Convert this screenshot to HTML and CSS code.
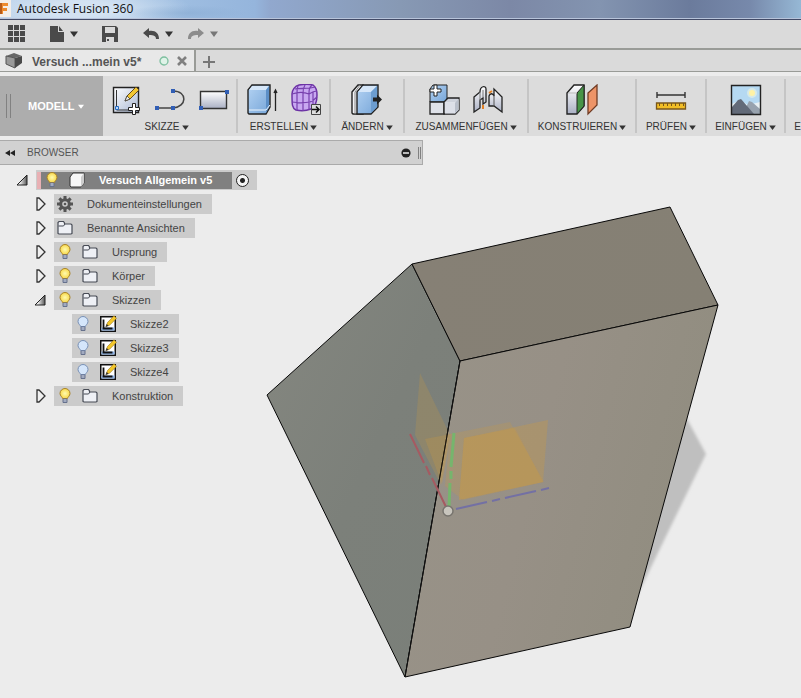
FILE: index.html
```html
<!DOCTYPE html>
<html lang="de">
<head>
<meta charset="utf-8">
<title>Autodesk Fusion 360</title>
<meta name="viewport" content="width=device-width, initial-scale=1">
<link rel="stylesheet" href="styles.css">
</head>
<body>
<svg class="sprite" aria-hidden="true">
  <defs>
    <linearGradient id="blue" x1="0" y1="0" x2="1" y2="1"><stop offset="0" stop-color="#b4d3f3"/><stop offset="1" stop-color="#76a5d8"/></linearGradient>
    <linearGradient id="silver" x1="0" y1="0" x2="0" y2="1"><stop offset="0" stop-color="#fff"/><stop offset="1" stop-color="#aab0c4"/></linearGradient>
    <linearGradient id="sheet" x1="0" y1="0" x2="1" y2="1"><stop offset="0" stop-color="#fff"/><stop offset="1" stop-color="#a9b8d4"/></linearGradient>
    <radialGradient id="glow"><stop offset="0" stop-color="#fffbb0"/><stop offset="1" stop-color="#f8d84a"/></radialGradient>
    <linearGradient id="wedge"><stop offset="0.3" stop-color="#eee"/><stop offset="1" stop-color="#555"/></linearGradient>
  </defs>
  <symbol id="caret" viewBox="0 0 8 6"><path d="M0 0.500h8L4 6z" fill="currentColor"/></symbol>
  <symbol id="bulb-on" viewBox="0 0 14 16"><path d="M4.500 10.500C4.500 9 2 8 2 5.500a5 5 0 0 1 10 0C12 8 9.500 9 9.500 10.500z" fill="url(#glow)" stroke="#a98228"/><path d="M5 11h4v3.500H5z" fill="#dde5f4" stroke="#66718c"/><path d="M5 13h4" stroke="#66718c"/></symbol>
  <symbol id="bulb-off" viewBox="0 0 14 16"><path d="M4.500 10.500C4.500 9 2 8 2 5.500a5 5 0 0 1 10 0C12 8 9.500 9 9.500 10.500z" fill="#d5e6fb" stroke="#7890b5"/><path d="M5 11h4v3.500H5z" fill="#dde5f4" stroke="#66718c"/><path d="M5 13h4" stroke="#66718c"/></symbol>
  <symbol id="folder" viewBox="0 0 16 16"><path d="M1 13.500v-11l1-1h4.500l1 1.500v1H14l1 1v8.500l-1 .5H2z" fill="#eef0f5" stroke="#474b55" stroke-width="1.200"/><path d="M1.500 6h5l1.500-2" fill="none" stroke="#474b55"/></symbol>
  <symbol id="sketch" viewBox="0 0 18 18"><path d="M1.750 1.750h14.500v14.500H1.750z" fill="#fff" stroke="#111" stroke-width="1.500"/><path d="M2.500 12.500h13v3h-13z" fill="#8cb4ea"/><path d="M4.500 4.500v9h9" fill="none" stroke="#111" stroke-width="1.800"/><path d="M7 11.500l1.500-4L15 .8l2.500 2.500-7 7z" fill="#f3c72a" stroke="#9a7418" stroke-width=".6"/><path d="M6.500 12l1.200-3 1.900 1.800z" fill="#333"/></symbol>
  <symbol id="closed" viewBox="0 0 10 14"><path d="M1 1h2l6 6-6 6H1z" fill="#f0f0f0" stroke="#333" stroke-width="1.300"/></symbol>
  <symbol id="open" viewBox="0 0 12 12"><path d="M11 1v10H1z" fill="url(#wedge)" stroke="#222"/></symbol>
  <symbol id="gear" viewBox="0 0 16 16"><path d="M8 0v16M0 8h16M2.350 2.350l11.300 11.300M2.350 13.650l11.300-11.300" stroke="#555" stroke-width="3"/><circle cx="8" cy="8" r="4.300" fill="#cbcbcb" stroke="#555" stroke-width="3"/><circle cx="8" cy="8" r="1.300" fill="#555"/></symbol>
</svg>

<header class="titlebar">
  <svg class="logo" viewBox="0 0 12 18"><path d="M0 0h11v17H0z" fill="#f4eee8"/><path d="M0 3h8v3H3v2h4v3H3v3H0z" fill="#ee8b2e"/><path d="M0 3h2v11H0z" fill="#b75b18"/></svg>
  <h1>Autodesk Fusion 360</h1>
</header>

<nav class="quickbar" aria-label="Schnellzugriff">
  <button aria-label="Datengruppe"><svg width="18" height="18" viewBox="0 0 18 18" fill="#4a4a4a"><path d="M0 0h5v5H0zM6 0h5v5H6zM12 0h5v5h-5zM0 6h5v5H0zM6 6h5v5H6zM12 6h5v5h-5zM0 12h5v5H0zM6 12h5v5H6zM12 12h5v5h-5z"/></svg></button>
  <button aria-label="Datei"><svg width="16" height="18" viewBox="0 0 16 18" fill="#4a4a4a"><path d="M1 1h8v6h6v10H1zM10 1l4 5h-4z"/></svg><svg class="caret"><use href="#caret"/></svg></button>
  <button aria-label="Speichern"><svg width="18" height="18" viewBox="0 0 18 18"><path d="M1 1h14l2 2v14H1z" fill="#4a4a4a"/><path d="M4 2h10v6H4z" fill="#dadada"/><path d="M5 12h8v5H5z" fill="#dadada"/><path d="M6 14h2v2H6z" fill="#4a4a4a"/></svg></button>
  <div class="history">
    <button aria-label="Rückgängig"><svg width="18" height="14" viewBox="0 0 18 14"><path d="M1 6l6-5v3c6-1 10 2 10 8h-3c0-3-2-4-7-4v3z" fill="#4a4a4a"/></svg><svg class="caret"><use href="#caret"/></svg></button>
    <button class="muted" aria-label="Wiederherstellen"><svg width="18" height="14" viewBox="0 0 18 14"><path d="M17 6l-6-5v3C5 3 1 6 1 12h3c0-3 2-4 7-4v3z" fill="#8c8c8c"/></svg><svg class="caret"><use href="#caret"/></svg></button>
  </div>
</nav>

<div class="tabs">
  <div class="tab">
    <svg width="18" height="18" viewBox="0 0 18 18"><path d="M1 4l8-3 8 3-7 2z" fill="#666"/><path d="M1 4l9 2v10l-9-4z" fill="#999" stroke="#555"/><path d="M10 6l7-2v7l-7 5z" fill="#4a4a4a"/></svg>
    <span class="tab-name">Versuch ...mein v5*</span>
    <svg width="10" height="10" viewBox="0 0 10 10"><circle cx="5" cy="5" r="4" fill="#dff3e8" stroke="#7dbf9f" stroke-width="1.300"/></svg>
    <button aria-label="Schließen"><svg width="10" height="10" viewBox="0 0 10 10"><path d="M1 1l8 8M9 1L1 9" stroke="#808080" stroke-width="2.600"/></svg></button>
  </div>
  <button class="new-tab" aria-label="Neue Registerkarte"><svg width="12" height="12" viewBox="0 0 12 12"><path d="M6 0v12M0 6h12" stroke="#777" stroke-width="2"/></svg></button>
</div>

<div class="ribbon">
  <button class="workspace"><span class="grip"></span><span>MODELL</span><svg class="caret small"><use href="#caret"/></svg></button>

  <section class="group sketch">
    <div class="tools">
      <button aria-label="Skizze erstellen"><svg width="30" height="32" viewBox="0 0 30 32"><path d="M1.500 3.500h25v25h-25z" fill="url(#sheet)" stroke="#222" stroke-width="1.400"/><path d="M4.500 6v20H22" fill="none" stroke="#333"/><path d="M3.500 22.500h3v3h-3z" fill="#b9d6fa" stroke="#246ac0"/><path d="M13 17l2-5L24 3l3 3-9 9z" fill="#f2c733" stroke="#654a1a"/><path d="M13 17l2-5 3 3z" fill="#eee" stroke="#333" stroke-width=".7"/><path d="M20.500 19.500h3v4h4v3h-4v4h-3v-4h-4v-3h4z" fill="#fff" stroke="#222"/></svg></button>
      <button aria-label="Linie"><svg width="32" height="32" viewBox="0 0 32 32"><path d="M3 24h16c14-1 15-17 0-17" fill="none" stroke="#444" stroke-width="1.500"/><path d="M1 22h4v4H1zM17 22h4v4h-4zM17 5h4v4h-4z" fill="#315eb5"/></svg></button>
      <button aria-label="Rechteck"><svg width="32" height="32" viewBox="0 0 32 32"><path d="M2.500 7.500h26v17h-26z" fill="url(#silver)" stroke="#333" stroke-width="1.400"/><path d="M27 6h4v4h-4zM1 22h4v4H1z" fill="#315eb5"/></svg></button>
    </div>
    <button class="group-name">SKIZZE<svg class="caret"><use href="#caret"/></svg></button>
  </section>

  <section class="group create">
    <div class="tools">
      <button aria-label="Extrusion"><svg width="32" height="32" viewBox="0 0 32 32"><path d="M2 6l4-5h18v22l-4 7H3l-1-1z" fill="url(#blue)" stroke="#222" stroke-width="1.400"/><path d="M3 6l3-4h17l-3 4z" fill="#d6e7f9"/><path d="M20 6l3-4v21l-3 6z" fill="#5c8fc7"/><path d="M3 26h17l4-5" fill="none" stroke="#edf5fc"/><path d="M29.500 27V6M28 9l1.500-3L31 9" fill="none" stroke="#222" stroke-width="1.300"/></svg></button>
      <button aria-label="Form erstellen"><svg width="32" height="32" viewBox="0 0 32 32"><path d="M2 10c0-4 3-8 7-9 6-1 10-1 14 0 3 2 4 5 4 10 0 8-2 11-6 14-5 2-11 2-15 1-4-2-4-5-4-16z" fill="#c8a8f1" stroke="#6c32a5" stroke-width="1.500"/><path d="M2 10c6-2 12-2 17 0 3-2 6-3 8-3M2 18c6 1 13 1 18 0 3-1 5-3 7-5M8 2c-1 2-1 4-1 7v17M15 1c-2 3-2 5-2 8v18M22 1c-3 3-3 5-3 9v16M5 5c6-1 14 0 20-2M23 8v15" fill="none" stroke="#7740ae" stroke-width="1.200"/><path d="M21.500 20.500h9v10h-9z" fill="#ddd" stroke="#444"/><path d="M22 25.500h6M26 22.500l3 3-3 3" stroke="#111" fill="none" stroke-width="1.500"/></svg></button>
    </div>
    <button class="group-name">ERSTELLEN<svg class="caret"><use href="#caret"/></svg></button>
  </section>

  <section class="group modify">
    <div class="tools">
      <button aria-label="Drücken/Ziehen"><svg width="32" height="32" viewBox="0 0 32 32"><path d="M1 8l6-7h5v29H2l-1-1z" fill="#f3f4f7" stroke="#222" stroke-width="1.400"/><path d="M4 30V8l5-7" fill="none" stroke="#888"/><path d="M6 8l6-7h15v22l-7 7H6z" fill="url(#blue)" stroke="#222" stroke-width="1.400"/><path d="M7 8l5-6h14l-6 6z" fill="#d6e7f9"/><path d="M20 8l6-6v21l-6 6z" fill="#6c9dd0"/><path d="M22 13.500h4v-3l5 5-5 5v-3h-4z" fill="#222"/></svg></button>
    </div>
    <button class="group-name">ÄNDERN<svg class="caret"><use href="#caret"/></svg></button>
  </section>

  <section class="group assemble">
    <div class="tools">
      <button aria-label="Neue Komponente"><svg width="32" height="32" viewBox="0 0 32 32"><path d="M2 5l3-4h14v14l-3 3H2z" fill="url(#blue)" stroke="#222"/><path d="M2 18h14v12H2z" fill="#dfe2e9" stroke="#222" stroke-width="1.300"/><path d="M16 18l4-4h11v12l-4 4H16z" fill="#cfd3dc" stroke="#222" stroke-width="1.300"/><path d="M17 18.500h10l3.500-3.500v11L27 29.500z" fill="#f4f5f8"/><path d="M27 18.500l3.500-3.500v11L27 29.500z" fill="#b9bfca"/><path d="M17 18.500h10v11H17z" fill="#dde0e8"/><path d="M6 1h3v4h4v3H9v4H6V8H2V5h4z" fill="#fff" stroke="#222"/></svg></button>
      <button aria-label="Verbindung"><svg width="32" height="32" viewBox="0 0 32 32"><path d="M2 13l6-5c0-6 6-7 6-3v13l-3 2v-6l-3 2v8l-6 4z" fill="url(#silver)" stroke="#222" stroke-width="1.300"/><path d="M8 8v9M11 6v8" stroke="#777"/><path d="M17 12c1-3 4-3 5 0V5l8 8v15l-8-6h-5z" fill="url(#silver)" stroke="#222" stroke-width="1.300"/><path d="M22 11v11" stroke="#555"/><path d="M11 21v4M17 9l3-2" stroke="#e48125" stroke-width="2"/></svg></button>
    </div>
    <button class="group-name">ZUSAMMENFÜGEN<svg class="caret"><use href="#caret"/></svg></button>
  </section>

  <section class="group construct">
    <div class="tools">
      <button aria-label="Versatzebene"><svg width="32" height="32" viewBox="0 0 32 32"><path d="M1 9l7-8h10v21l-7 8H1z" fill="url(#silver)" stroke="#222" stroke-width="1.400"/><path d="M11 9l7-8v21l-7 8z" fill="#479447" stroke="#222"/><path d="M2 9h9" stroke="#bbb"/><path d="M22 9l9-8v20l-9 9z" fill="#ed9467" stroke="#713c24" stroke-width="1.300"/></svg></button>
    </div>
    <button class="group-name">KONSTRUIEREN<svg class="caret"><use href="#caret"/></svg></button>
  </section>

  <section class="group inspect">
    <div class="tools">
      <button aria-label="Messen"><svg width="32" height="32" viewBox="0 0 32 32"><path d="M2 11h28M2 8v6M30 8v6" stroke="#333" stroke-width="1.400"/><path d="M1.500 19h29v6h-29z" fill="#f1bd25" stroke="#79571b" stroke-width="1.300"/><path d="M4.500 19v3M8.500 19v3M12.500 19v3M16.500 19v3M20.500 19v3M24.500 19v3M28.500 19v3" stroke="#79571b"/></svg></button>
    </div>
    <button class="group-name">PRÜFEN<svg class="caret"><use href="#caret"/></svg></button>
  </section>

  <section class="group insert">
    <div class="tools">
      <button aria-label="Bild einfügen"><svg width="32" height="32" viewBox="0 0 32 32"><path d="M1.500 1.500h29v29h-29z" fill="#b5d9f2"/><circle cx="22" cy="9" r="5" fill="#d6e9e8"/><circle cx="22" cy="9" r="3" fill="#fff2a5"/><path d="M2 20l8-4 8 5 12-3v12H2z" fill="#e8f0f3"/><path d="M13 30l6-13 3 1 8 7v5z" fill="#97a2ae"/><path d="M2 23l6-7 3-1 13 15H2z" fill="#626a78"/><path d="M1.500 1.500h29v29h-29z" fill="none" stroke="#222" stroke-width="1.400"/></svg></button>
    </div>
    <button class="group-name">EINFÜGEN<svg class="caret"><use href="#caret"/></svg></button>
  </section>

  <section class="group cut"><div class="tools"></div><button class="group-name">E</button></section>
</div>

<main class="viewport">
  <svg class="model" viewBox="0 0 801 562" preserveAspectRatio="xMinYMin meet" role="img" aria-label="Körper mit Ursprungsebenen">
    <defs>
      <linearGradient id="front" x1="0" y1="0" x2="1" y2="0.300"><stop offset="0" stop-color="#989388"/><stop offset="0.500" stop-color="#979086"/><stop offset="1" stop-color="#918d80"/></linearGradient>
      <linearGradient id="side" x1="0" y1="0" x2="1" y2="1"><stop offset="0" stop-color="#858780"/><stop offset="0.500" stop-color="#7c807a"/><stop offset="1" stop-color="#7a7f79"/></linearGradient>
      <linearGradient id="top"><stop offset="0" stop-color="#868075"/><stop offset="1" stop-color="#858074"/></linearGradient>
      <filter id="soft"><feGaussianBlur stdDeviation="1.500"/></filter>
    </defs>
    <path d="M680 270l26 48-70 144z" fill="#bfbfbf" filter="url(#soft)"/>
    <g stroke="#080808" stroke-width="1" stroke-linejoin="round">
      <path d="M412 128L460 225 405 541 267 259z" fill="url(#side)"/>
      <path d="M412 128L670 71 718 169 460 225z" fill="url(#top)"/>
      <path d="M460 225L718 169 630 491 405 541z" fill="url(#front)"/>
    </g>
    <g fill="#d09a3c">
      <path d="M420 237l30 62-9 50-26-50z" opacity=".22"/>
      <path d="M425 303l26-5-9 50z" opacity=".25"/>
      <path d="M450 298l60-12 34 60-81 18-18-14z" opacity=".22"/>
      <path d="M464 302l84-18-5 62-84 18z" opacity=".3"/>
      <path d="M464 302l51-10 28 54-84 18z" opacity=".2"/>
    </g>
    <path d="M460 225L405 541" stroke="#111"/>
    <g fill="none" stroke-width="2">
      <path d="M410 298l14 29M426 330l4 9M432 342l15 31" stroke="#a65a61"/>
      <path d="M454 297l-3 34M451 335v8M450 347l-1 24" stroke="#76b56d" stroke-width="3"/>
      <path d="M456 373l31-7M492 365l8-2M505 362l31-7M541 354l8-2" stroke="#7370a4"/>
    </g>
    <circle cx="448" cy="375" r="5" fill="#c8c5bd" stroke="#77746e" stroke-width="1.500"/>
  </svg>

  <aside class="browser">
    <div class="browser-head">
      <button aria-label="Einklappen"><svg width="12" height="8" viewBox="0 0 12 8"><path d="M6 1v6L1 4zM11 1v6L6 4z" fill="#222"/></svg></button>
      <h2>BROWSER</h2>
      <button aria-label="Minimieren"><svg width="10" height="10" viewBox="0 0 10 10"><circle cx="5" cy="5" r="4.600" fill="#222"/><path d="M2 5h6" stroke="#eee" stroke-width="1.500"/></svg></button>
      <span class="grip slim"></span>
    </div>
    <ul class="tree">
      <li>
        <div class="row"><button class="toggle" aria-label="Zuklappen"><svg width="12" height="12"><use href="#open"/></svg></button>
          <div class="node root"><div class="selected"><span class="slot"><svg width="14" height="16"><use href="#bulb-on"/></svg></span><span class="slot"><svg width="16" height="16" viewBox="0 0 16 16"><path d="M1 5l3-4h11v10l-3 4H2l-1-1z" fill="#f7f7f7" stroke="#333"/><path d="M12 5l3-4v10l-3 4z" fill="#ccc"/></svg></span><label for="active">Versuch Allgemein v5</label></div><input type="radio" id="active" checked></div></div>
        <ul>
          <li><div class="row"><button class="toggle closed" aria-label="Aufklappen"><svg width="10" height="14"><use href="#closed"/></svg></button><div class="node"><span class="slot"><svg width="16" height="16"><use href="#gear"/></svg></span><span class="name">Dokumenteinstellungen</span></div></div></li>
          <li><div class="row"><button class="toggle closed" aria-label="Aufklappen"><svg width="10" height="14"><use href="#closed"/></svg></button><div class="node"><span class="slot"><svg width="16" height="16"><use href="#folder"/></svg></span><span class="name">Benannte Ansichten</span></div></div></li>
          <li><div class="row"><button class="toggle closed" aria-label="Aufklappen"><svg width="10" height="14"><use href="#closed"/></svg></button><div class="node"><span class="slot"><svg width="14" height="16"><use href="#bulb-on"/></svg></span><span class="slot"><svg width="16" height="16"><use href="#folder"/></svg></span><span class="name">Ursprung</span></div></div></li>
          <li><div class="row"><button class="toggle closed" aria-label="Aufklappen"><svg width="10" height="14"><use href="#closed"/></svg></button><div class="node"><span class="slot"><svg width="14" height="16"><use href="#bulb-on"/></svg></span><span class="slot"><svg width="16" height="16"><use href="#folder"/></svg></span><span class="name">Körper</span></div></div></li>
          <li><div class="row"><button class="toggle" aria-label="Zuklappen"><svg width="12" height="12"><use href="#open"/></svg></button><div class="node"><span class="slot"><svg width="14" height="16"><use href="#bulb-on"/></svg></span><span class="slot"><svg width="16" height="16"><use href="#folder"/></svg></span><span class="name">Skizzen</span></div></div>
            <ul class="leaves">
              <li><div class="row"><div class="node"><span class="slot"><svg width="14" height="16"><use href="#bulb-off"/></svg></span><span class="slot"><svg width="18" height="18"><use href="#sketch"/></svg></span><span class="name">Skizze2</span></div></div></li>
              <li><div class="row"><div class="node"><span class="slot"><svg width="14" height="16"><use href="#bulb-off"/></svg></span><span class="slot"><svg width="18" height="18"><use href="#sketch"/></svg></span><span class="name">Skizze3</span></div></div></li>
              <li><div class="row"><div class="node"><span class="slot"><svg width="14" height="16"><use href="#bulb-off"/></svg></span><span class="slot"><svg width="18" height="18"><use href="#sketch"/></svg></span><span class="name">Skizze4</span></div></div></li>
            </ul>
          </li>
          <li><div class="row"><button class="toggle closed" aria-label="Aufklappen"><svg width="10" height="14"><use href="#closed"/></svg></button><div class="node"><span class="slot"><svg width="14" height="16"><use href="#bulb-on"/></svg></span><span class="slot"><svg width="16" height="16"><use href="#folder"/></svg></span><span class="name">Konstruktion</span></div></div></li>
        </ul>
      </li>
    </ul>
  </aside>
</main>
</body>
</html>
```

FILE: styles.css
```css
* { box-sizing: border-box; }

body {
  margin: 0;
  min-height: 100vh;
  display: flex;
  flex-direction: column;
  overflow: hidden;
  background: #ececec;
  color: #444;
  font: 11px/16px "Liberation Sans", Arial, sans-serif;
}

button {
  display: flex;
  align-items: center;
  margin: 0;
  padding: 0;
  border: 0;
  background: none;
  color: inherit;
  font: inherit;
}

svg { display: block; flex: none; }
ul { margin: 0; padding: 0; list-style: none; }
h1, h2 { margin: 0; font-weight: normal; }
.sprite { position: absolute; width: 0; height: 0; }
.caret { width: 8px; height: 6px; }
.caret.small { width: 6px; height: 5px; }

.titlebar {
  display: flex;
  align-items: center;
  gap: 5px;
  height: 20px;
  padding-bottom: 2px;
  border-bottom: 1px solid #424a66;
  box-shadow: inset 0 -1px #b8c4da;
  background:
    radial-gradient(ellipse 60px 8px at 185px 13px, #86a9d088 0, transparent 100%),
    radial-gradient(ellipse 110px 26px at 80px 9px, #d3e2f2 30%, transparent 100%),
    linear-gradient(90deg, #b9d0e9 0, #a2c1e3 150px, #95b5dc 255px, #91a8ce 270px, #8799b4 400px, #7c88a6 510px, #8394b0 600px, #6b7b9c 690px, #7789ab 750px, #96b8d5 100%);
}
.logo { width: 12px; height: 18px; }
.titlebar h1 { color: #111; font: 12px/16px "Open Sans", "Noto Sans", sans-serif; }

.quickbar {
  display: flex;
  align-items: center;
  gap: 23px;
  height: 30px;
  padding: 0 8px;
  border-bottom: 2px solid #999b97;
  background: #dadada;
}
.quickbar button { gap: 5px; color: #333; }
.quickbar .history { display: flex; gap: 14px; }
.quickbar .muted { color: #777; }

.tabs {
  display: flex;
  height: 22px;
  border-bottom: 1px solid #999b97;
  background: #dadada;
}
.tab {
  display: flex;
  align-items: center;
  gap: 8px;
  padding: 0 7px 0 5px;
  border-right: 2px solid #999b97;
  background: #e8e8e8;
}
.tab-name { padding: 3px 10px 0 1px; color: #555; font-size: 12px; font-weight: bold; }
.new-tab { padding: 2px 7px 0; }

.ribbon {
  display: flex;
  height: 60px;
  margin-top: 4px;
  overflow: hidden;
  background: #dcdcdc;
}
.workspace {
  flex: none;
  gap: 4px;
  width: 103px;
  padding-left: 6px;
  background: #adadad;
  color: #fff;
  font-weight: bold;
}
.grip { width: 5px; height: 24px; margin-right: 13px; border: solid #818181; border-width: 0 1px; }
.grip.slim { width: 3px; height: 12px; margin: 0; }

.group {
  flex: none;
  display: flex;
  flex-direction: column;
  align-items: center;
  gap: 3px;
  padding: 8px 0 0;
  border-right: 2px solid;
  border-image: linear-gradient(transparent 4px, #c5c5c5 4px, #c5c5c5 56px, transparent 56px) 1;
}
.tools { display: flex; justify-content: center; gap: 12px; height: 32px; }
.group-name { gap: 2px; font-size: 10px; line-height: 16px; color: #333; }
.group-name .caret { width: 7px; height: 5px; }
.sketch { width: 135px; padding-right: 6px; }
.sketch .tools { padding-left: 8px; }
.create { width: 93px; }
.modify { width: 74px; }
.assemble { width: 124px; }
.construct { width: 108px; }
.inspect { width: 70px; }
.insert { width: 79px; }
.cut { flex: 1; align-items: flex-end; border: 0; }

.viewport { flex: 1; display: grid; align-items: start; }
.model, .browser { grid-area: 1 / 1; }
.model { width: 100%; }
.browser { width: 423px; max-width: 100%; padding-top: 4px; }

.browser-head {
  display: flex;
  align-items: center;
  gap: 7px;
  height: 25px;
  padding: 0 1px 0 4px;
  border: 1px solid #aaa;
  border-width: 1px 1px 1px 0;
  background: #d1d1d1;
}
.browser-head h2 { flex: 1; padding-left: 4px; font-size: 10px; color: #555; }

.tree { padding: 5px 0 0 16px; }
.tree ul { padding-left: 18px; }
.tree .leaves { padding-left: 38px; }
.row { display: flex; height: 20px; margin-bottom: 4px; }
.toggle { width: 20px; }
.toggle.closed { padding-left: 2px; }
.node { display: flex; align-items: center; height: 20px; background: #cbcbcb; }
.slot { display: flex; justify-content: center; width: 22px; margin-right: 3px; }
.name { padding: 0 10px 0 8px; }
.root { padding-left: 1px; }
.selected {
  display: flex;
  align-items: center;
  height: 17px;
  border-left: 4px solid #e8b0b4;
  background: #808080;
  color: #fff;
  font-weight: bold;
}
.selected label { padding: 0 20px 0 8px; }
.root input {
  appearance: none;
  width: 13px;
  height: 13px;
  margin: 0 8px 0 4px;
  border: 1px solid #222;
  border-radius: 50%;
  background: radial-gradient(circle, #222 2px, #f4f4f4 3px);
}
```
